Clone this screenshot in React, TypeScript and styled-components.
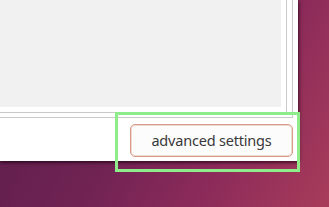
import React from "react";
import styled, { createGlobalStyle } from "styled-components";

const Global = createGlobalStyle`
  html, body { margin: 0; padding: 0; }
  body { width: 329px; height: 207px; overflow: hidden; }
`;

const Desktop = styled.div`
  position: relative;
  width: 329px;
  height: 207px;
  overflow: hidden;
  background: linear-gradient(118deg, #5a1d4c 0%, #6f2353 42%, #8a2a5a 68%, #a83c5a 100%);
  font-family: "Noto Sans", "DejaVu Sans", sans-serif;
`;

const Window = styled.div`
  width: 298px;
  height: 161px;
  background: #ffffff;
  box-shadow: 1px 1px 4px rgba(30, 0, 20, 0.6), 0 2px 2px rgba(30, 0, 20, 0.35);
  display: flex;
  flex-direction: column;
`;

const Frame = styled.div<{ $w: number; $h: number }>`
  box-sizing: border-box;
  width: ${(p) => p.$w}px;
  height: ${(p) => p.$h}px;
  border-right: 1px solid #c9c9c9;
  border-bottom: 1px solid #c9c9c9;
  flex: none;
`;

const Panel = styled.div`
  width: 281px;
  height: 107px;
  background: #f1f1f1;
`;

const Footer = styled.div`
  display: flex;
  justify-content: flex-end;
  padding: 6px 5px 0 0;
`;

const Button = styled.button`
  box-sizing: border-box;
  width: 163px;
  height: 33px;
  border: 1px solid #d69c88;
  box-shadow: inset 0 0 0 1px rgba(224, 176, 158, 0.45);
  border-radius: 5px;
  background: #fdfcfc;
  color: #383838;
  font-family: "Noto Sans", "DejaVu Sans", sans-serif;
  font-size: 14.5px;
  letter-spacing: -0.2px;
  padding: 0 0 1px 0;
`;

const Highlight = styled.div`
  position: absolute;
  left: 115px;
  top: 112px;
  width: 185px;
  height: 60px;
  box-sizing: border-box;
  border: 3px solid #8fec8a;
  pointer-events: none;
`;

export default function App() {
  return (
    <Desktop>
      <Global />
      <Window>
        <Frame $w={293} $h={118}>
          <Frame $w={287} $h={113}>
            <Panel />
          </Frame>
        </Frame>
        <Footer>
          <Button>advanced settings</Button>
        </Footer>
      </Window>
      <Highlight />
    </Desktop>
  );
}
